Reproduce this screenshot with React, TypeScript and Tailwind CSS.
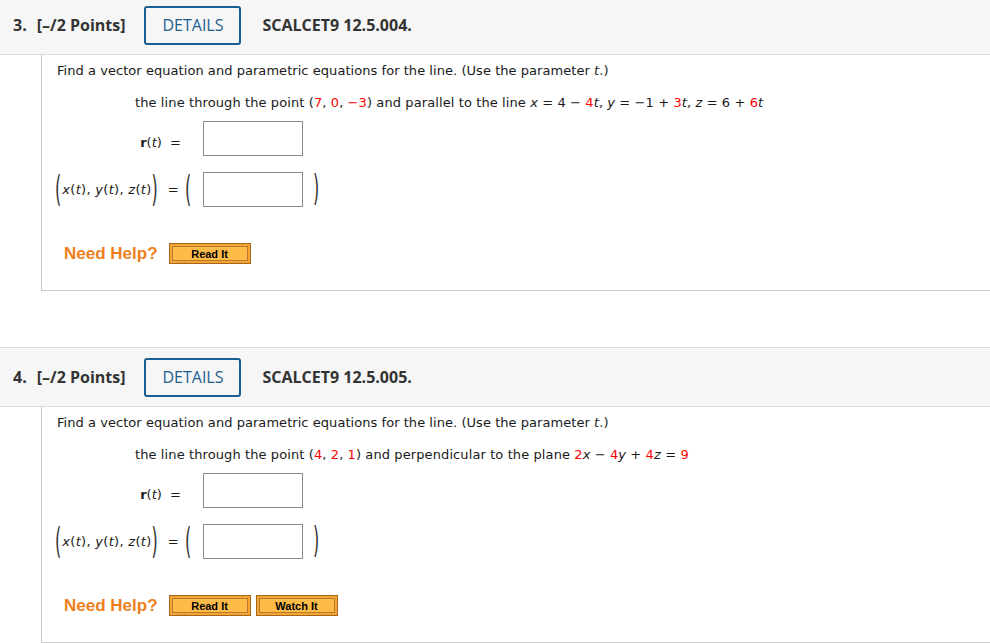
import React from "react";

const R = ({ children }: { children: React.ReactNode }) => (
  <span className="text-[#f00]">{children}</span>
);

const I = ({ children }: { children: React.ReactNode }) => (
  <span className="italic">{children}</span>
);

function BigParen({ side }: { side: "(" | ")" }) {
  return (
    <span className="inline-block shrink-0 origin-center scale-y-[2.2] font-['DejaVu_Sans',sans-serif] text-[16px] leading-none text-[#333]">
      {side}
    </span>
  );
}

function AnswerBox() {
  return <div className="h-[35px] w-[100px] shrink-0 border border-[#8a8a8a] bg-white" />;
}

function HelpButton({ label }: { label: string }) {
  return (
    <div className="h-[21px] w-[82px] border border-[#a5651f] bg-[#f5a531] p-[2px]">
      <div className="flex h-full items-center justify-center border border-[#b57a30] bg-[#ffbb48] font-['Liberation_Sans',Arial,sans-serif] text-[11px] font-bold text-black">
        {label}
      </div>
    </div>
  );
}

function Header({ num, code }: { num: number; code: string }) {
  return (
    <div className="flex h-[60px] items-center border-y border-[#dcdcdc] bg-[#f6f6f6] pl-[13px] font-['Open_Sans',sans-serif] text-[16px] text-[#333]">
      <span className="font-bold">{num}.</span>
      <span className="ml-[10px] font-bold">[–/2 Points]</span>
      <div className="ml-[19px] flex h-[39px] w-[97px] items-center justify-center rounded-[3px] border-2 border-[#1b5e91] text-[16px] font-medium text-[#1f5f8f]">
        DETAILS
      </div>
      <span className="ml-[21px] font-bold">{code}</span>
    </div>
  );
}

function Question({
  num,
  code,
  line,
  watch,
}: {
  num: number;
  code: string;
  line: React.ReactNode;
  watch?: boolean;
}) {
  return (
    <div>
      <Header num={num} code={code} />

      <div className="ml-[41px] h-[236px] border-b border-l border-[#cccccc] pl-[15px] pt-[7px] font-['DejaVu_Sans',Verdana,sans-serif] text-[13px] leading-[18px] text-[#1a1a1a]">
        <p className="tracking-[0.05px]">
          Find a vector equation and parametric equations for the line. (Use the parameter <I>t</I>.)
        </p>

        <p className="ml-[78px] mt-[14px] tracking-[0.1px]">{line}</p>

        {/* r(t) row */}
        <div className="mt-[9px] flex items-center">
          <div className="mt-[8px] w-[124px] shrink-0 text-right">
            <span className="font-bold">r</span>(<I>t</I>)&nbsp;&nbsp;=
          </div>
          <div className="w-[22px] shrink-0" />
          <AnswerBox />
        </div>

        {/* components row */}
        <div className="mt-[16px] flex items-center">
          <div className="-ml-[2px] flex w-[128px] shrink-0 items-center whitespace-nowrap">
            <BigParen side="(" />
            <span className="ml-[1px] tracking-[0.3px]">
              <I>x</I>(<I>t</I>), <I>y</I>(<I>t</I>), <I>z</I>(<I>t</I>)
            </span>
            <BigParen side=")" />
            <span className="ml-[10px]">=</span>
          </div>
          <div className="flex w-[20px] shrink-0 pl-[2px]">
            <BigParen side="(" />
          </div>
          <AnswerBox />
          <div className="ml-[10px]">
            <BigParen side=")" />
          </div>
        </div>

        {/* help row */}
        <div className="mt-[36px] flex items-center">
          <span className="ml-[7px] font-['Liberation_Sans',Arial,sans-serif] text-[17px] font-bold text-[#ee7f1b]">
            Need Help?
          </span>
          <div className="ml-[11px] flex gap-[5px]">
            <HelpButton label="Read It" />
            {watch && <HelpButton label="Watch It" />}
          </div>
        </div>
      </div>
    </div>
  );
}

export default function App() {
  return (
    <div className="-mt-[5px] min-h-screen bg-white">
      <Question
        num={3}
        code="SCALCET9 12.5.004."
        line={
          <>
            the line through the point (<R>7</R>, <R>0</R>, <R>−3</R>) and parallel to the line <I>x</I> = 4 − <R>4</R>
            <I>t</I>, <I>y</I> = −1 + <R>3</R>
            <I>t</I>, <I>z</I> = 6 + <R>6</R>
            <I>t</I>
          </>
        }
      />

      <div className="h-[56px]" />

      <Question
        num={4}
        code="SCALCET9 12.5.005."
        watch
        line={
          <>
            the line through the point (<R>4</R>, <R>2</R>, <R>1</R>) and perpendicular to the plane <R>2</R>
            <I>x</I> − <R>4</R>
            <I>y</I> + <R>4</R>
            <I>z</I> = <R>9</R>
          </>
        }
      />
    </div>
  );
}
